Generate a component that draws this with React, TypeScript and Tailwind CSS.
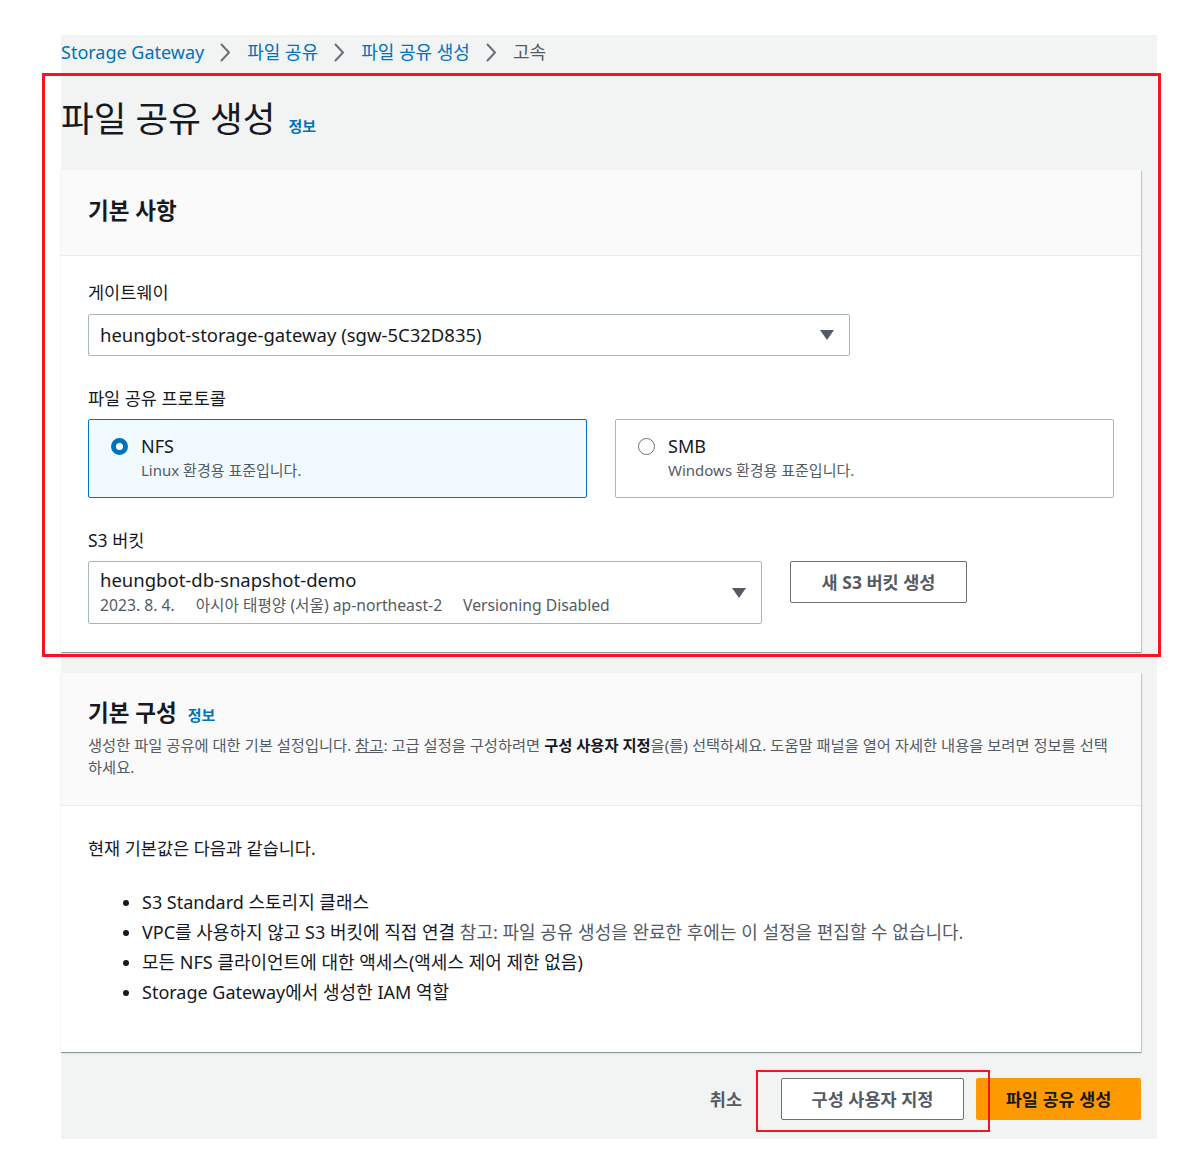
import type React from "react"

const font = "font-['Noto_Sans','Noto_Sans_CJK_KR',sans-serif]"

const Chevron: React.FC = () => (
  <svg width="11" height="19" viewBox="0 0 11 19" fill="none" className="shrink-0">
    <path d="M1.5 1.5 L9 9.5 L1.5 17.5" stroke="#687078" strokeWidth="2" strokeLinejoin="round" strokeLinecap="round" />
  </svg>
)

const Caret: React.FC = () => (
  <svg width="14" height="10" viewBox="0 0 14 10" className="shrink-0">
    <polygon points="0,0 14,0 7,10" fill="#545b64" />
  </svg>
)

const Radio: React.FC<{ checked?: boolean }> = ({ checked }) =>
  checked ? (
    <span className="w-[17px] h-[17px] rounded-full border-[5px] border-[#0073bb] bg-white shrink-0" />
  ) : (
    <span className="w-[17px] h-[17px] rounded-full border-[1.5px] border-[#687078] bg-white shrink-0" />
  )

const Info: React.FC = () => (
  <span className="text-[15px] font-bold text-[#0073bb] leading-none">정보</span>
)

export default function App() {
  return (
    <div className={`relative w-[1192px] h-[1158px] bg-white text-[#16191f] pt-[35px] pl-[61px] ${font}`}>
      <div className="w-[1096px] h-[1104px] bg-[#f2f3f3] pr-[16px]">
        {/* breadcrumb */}
        <div className="h-[35px] flex items-center gap-[16px] text-[18px]">
          <span className="text-[#0073bb]">Storage Gateway</span>
          <Chevron />
          <span className="text-[#0073bb]">파일 공유</span>
          <Chevron />
          <span className="text-[#0073bb]">파일 공유 생성</span>
          <Chevron />
          <span className="text-[#545b64]">고속</span>
        </div>

        {/* title */}
        <div className="pt-[26px] pb-[30px] flex items-baseline gap-[13px]">
          <h1 className="text-[35.5px] leading-[44px] font-normal">파일 공유 생성</h1>
          <Info />
        </div>

        {/* 기본 사항 */}
        <section className="bg-white shadow-[0_1px_1px_0_rgba(0,28,36,0.3),1px_1px_1px_0_rgba(0,28,36,0.15)]">
          <div className="h-[86px] px-[27px] pb-[4px] flex items-center bg-[#fafafa] border-b border-[#eaeded]">
            <h2 className="text-[22.5px] font-bold">기본 사항</h2>
          </div>
          <div className="px-[27px] pt-[25px] pb-[28px]">
            <div className="text-[17.5px] leading-[22px] mb-[11px]">게이트웨이</div>
            <div className="w-[762px] h-[42px] border border-[#aab7b8] rounded-[2px] flex items-center justify-between pl-[11px] pr-[15px]">
              <span className="text-[18.5px]">heungbot-storage-gateway (sgw-5C32D835)</span>
              <Caret />
            </div>

            <div className="mt-[31px] text-[17.5px] leading-[22px] mb-[10px]">파일 공유 프로토콜</div>
            <div className="grid grid-cols-2 gap-[28px]">
              <div className="h-[79px] border border-[#0073bb] bg-[#f1faff] rounded-[2px] pl-[22px] pt-[13px]">
                <div className="flex items-center gap-[13px]">
                  <Radio checked />
                  <span className="text-[18px] leading-[26px]">NFS</span>
                </div>
                <div className="pl-[30px] text-[15px] leading-[22px] text-[#545b64]">Linux 환경용 표준입니다.</div>
              </div>
              <div className="h-[79px] border border-[#aab7b8] rounded-[2px] pl-[22px] pt-[13px]">
                <div className="flex items-center gap-[13px]">
                  <Radio />
                  <span className="text-[18px] leading-[26px]">SMB</span>
                </div>
                <div className="pl-[30px] text-[15px] leading-[22px] text-[#545b64]">Windows 환경용 표준입니다.</div>
              </div>
            </div>

            <div className="mt-[31px] text-[17.5px] leading-[22px] mb-[10px]">S3 버킷</div>
            <div className="flex items-start gap-[28px]">
              <div className="w-[674px] h-[63px] border border-[#aab7b8] rounded-[2px] flex items-center justify-between pl-[11px] pr-[15px]">
                <div className="pt-[2px]">
                  <div className="text-[18.5px] leading-[24px]">heungbot-db-snapshot-demo</div>
                  <div className="flex gap-[21px] text-[15.7px] leading-[27px] text-[#545b64]">
                    <span>2023. 8. 4.</span>
                    <span>아시아 태평양 (서울) ap-northeast-2</span>
                    <span>Versioning Disabled</span>
                  </div>
                </div>
                <Caret />
              </div>
              <button className="w-[177px] h-[42px] border border-[#687078] rounded-[2px] bg-white text-[17.5px] font-bold text-[#545b64]">
                새 S3 버킷 생성
              </button>
            </div>
          </div>
        </section>

        {/* 기본 구성 */}
        <section className="mt-[21px] bg-white shadow-[0_1px_1px_0_rgba(0,28,36,0.3),1px_1px_1px_0_rgba(0,28,36,0.15)]">
          <div className="px-[27px] pt-[25px] pb-[27px] bg-[#fafafa] border-b border-[#eaeded]">
            <div className="flex items-baseline gap-[11px]">
              <h2 className="text-[22.5px] leading-[30px] font-bold">기본 구성</h2>
              <Info />
            </div>
            <p className="mt-[6px] text-[15.3px] leading-[22px] text-[#545b64] whitespace-nowrap">
              생성한 파일 공유에 대한 기본 설정입니다. <span className="underline">참고</span>: 고급 설정을 구성하려면{" "}
              <b className="text-[#16191f]">구성 사용자 지정</b>을(를) 선택하세요. 도움말 패널을 열어 자세한 내용을 보려면 정보를 선택
              <br />
              하세요.
            </p>
          </div>
          <div className="px-[27px] pt-[29px] pb-[45px]">
            <p className="text-[17.5px] leading-[26px]">현재 기본값은 다음과 같습니다.</p>
            <ul className="mt-[26px] list-disc pl-[54px] text-[18px] leading-[30px]">
              <li>S3 Standard 스토리지 클래스</li>
              <li>
                VPC를 사용하지 않고 S3 버킷에 직접 연결{" "}
                <span className="text-[#545b64]">참고: 파일 공유 생성을 완료한 후에는 이 설정을 편집할 수 없습니다.</span>
              </li>
              <li>모든 NFS 클라이언트에 대한 액세스(액세스 제어 제한 없음)</li>
              <li>Storage Gateway에서 생성한 IAM 역할</li>
            </ul>
          </div>
        </section>

        {/* footer */}
        <div className="mt-[26px] flex items-center justify-end">
          <span className="text-[17.5px] font-bold text-[#545b64] mr-[39px]">취소</span>
          <button className="w-[183px] h-[42px] border border-[#687078] rounded-[2px] bg-white text-[17.5px] font-bold text-[#545b64]">
            구성 사용자 지정
          </button>
          <button className="ml-[12px] w-[165px] h-[42px] rounded-[2px] bg-[#ff9900] text-[17.5px] font-bold text-[#16191f]">
            파일 공유 생성
          </button>
        </div>
      </div>

      {/* annotation boxes */}
      <div className="absolute left-[42px] top-[73px] w-[1119px] h-[584px] border-[3px] border-[#f5141f]" />
      <div className="absolute left-[756px] top-[1070px] w-[234px] h-[62px] border-[2.5px] border-[#f5141f]" />
    </div>
  )
}
